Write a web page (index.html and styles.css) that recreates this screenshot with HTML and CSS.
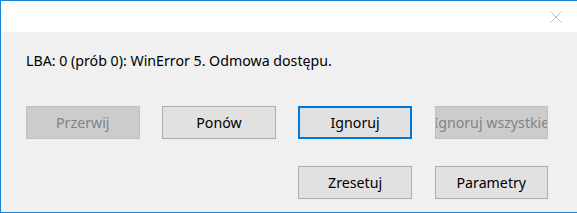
FILE: index.html
```html
<!DOCTYPE html>
<html>
<head>
    <title>Błąd odczytu</title>
    <meta charset="utf-8">
    <link rel="stylesheet" href="styles.css">
</head>
<body>
<div class="window">
    <div class="titlebar">
        <svg class="close" width="12" height="12" viewBox="0 0 12 12">
            <path d="M0.5 0.5 L11.5 11.5 M11.5 0.5 L0.5 11.5" stroke="#c4c4c4" stroke-width="1" fill="none"/>
        </svg>
    </div>
    <div class="content">
        <p class="message">LBA: 0 (prób 0): WinError 5. Odmowa dostępu.</p>
        <div class="buttons">
            <div class="btn disabled">Przerwij</div>
            <div class="btn">Ponów</div>
            <div class="btn default">Ignoruj</div>
            <div class="btn disabled">Ignoruj wszystkie</div>
            <div class="btn col3">Zresetuj</div>
            <div class="btn">Parametry</div>
        </div>
    </div>
</div>
</body>
</html>
```

FILE: styles.css
```css
/* Page */
body {
    margin: 0;
    font-family: 'Noto Sans', 'Open Sans', sans-serif;
    font-size: 14.2px;
}

/* Dialog window */
.window {
    width: 577px;
    height: 213px;
    box-sizing: border-box;
    border: 1px solid #1883d7;
    border-right: none;
    display: flex;
    flex-direction: column;
}

.titlebar {
    height: 31px;
    background-color: white;
    display: flex;
    justify-content: flex-end;
    align-items: flex-start;
}

.close {
    margin: 10px 15px 0 0;
}

.content {
    flex: 1;
    background-color: #f0f0f0;
    padding: 0 0 0 25px;
}

.message {
    margin: 19px 0 0 0;
    line-height: 19px;
    color: black;
}

/* Buttons */
.buttons {
    display: grid;
    grid-template-columns: repeat(4, 113.5px);
    grid-auto-rows: 33px;
    column-gap: 22.7px;
    row-gap: 27px;
    margin-top: 36px;
}

.btn {
    box-sizing: border-box;
    border: 1px solid #adadad;
    background-color: #e1e1e1;
    color: black;
    display: flex;
    align-items: center;
    justify-content: center;
    white-space: nowrap;
    overflow: hidden;
}

.btn.disabled {
    background-color: #cccccc;
    border-color: #bfbfbf;
    color: #838383;
}

.btn.default {
    border: 2px solid #0078d7;
}

.col3 {
    grid-column: 3;
}
```
